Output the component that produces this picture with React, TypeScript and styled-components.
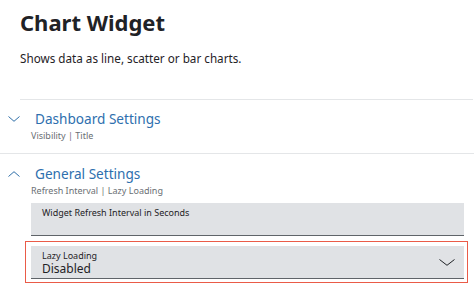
import styled, { createGlobalStyle } from "styled-components";

const GlobalStyle = createGlobalStyle`
  body {
    margin: 0;
    background: #ffffff;
    font-family: "Noto Sans", "Open Sans", sans-serif;
    color: #1f2226;
  }
`;

const Chevron = ({ up, w = 12, h = 6 }: { up?: boolean; w?: number; h?: number }) => (
  <svg width={w} height={h} viewBox={`0 0 ${w} ${h}`} fill="none">
    <path
      d={up ? `M0.5 ${h - 0.5}L${w / 2} 0.7L${w - 0.5} ${h - 0.5}` : `M0.5 0.5L${w / 2} ${h - 0.7}L${w - 0.5} 0.5`}
      stroke="currentColor"
      strokeWidth="1"
    />
  </svg>
);

const App = () => {
  return (
    <>
      <GlobalStyle />
      <Page>
        <Header>
          <Title>Chart Widget</Title>
          <Description>Shows data as line, scatter or bar charts.</Description>
        </Header>
        <Section $divided>
          <SectionHead>
            <Toggle>
              <Chevron />
            </Toggle>
            <SectionTitle>Dashboard Settings</SectionTitle>
          </SectionHead>
          <SectionSub>Visibility | Title</SectionSub>
        </Section>
        <Section>
          <SectionHead>
            <Toggle>
              <Chevron up />
            </Toggle>
            <SectionTitle>General Settings</SectionTitle>
          </SectionHead>
          <SectionSub>Refresh Interval | Lazy Loading</SectionSub>
          <Fields>
            <Field>
              <FieldLabel>Widget Refresh Interval in Seconds</FieldLabel>
            </Field>
            <FocusRing>
              <Field>
                <FieldLabel>Lazy Loading</FieldLabel>
                <FieldValue>Disabled</FieldValue>
                <SelectArrow>
                  <Chevron w={16} h={7} />
                </SelectArrow>
              </Field>
            </FocusRing>
          </Fields>
        </Section>
      </Page>
    </>
  );
};

export default App;

const Page = styled.div`
  width: 474px;
  height: 287px;
  overflow: hidden;
`;
const Header = styled.div`
  box-sizing: border-box;
  height: 100px;
  padding-top: 7px;
  margin: 0 1px 0 20px;
  border-bottom: 1px solid #e4e6e8;
`;
const Title = styled.h1`
  margin: 0;
  font-size: 22px;
  line-height: 30px;
  font-weight: 700;
  color: #1f2226;
`;
const Description = styled.p`
  margin: 13px 0 0;
  font-size: 11.7px;
  line-height: 16px;
  color: #1f2226;
`;
const Section = styled.div<{ $divided?: boolean }>`
  padding-top: ${(p) => (p.$divided ? "9px" : "10px")};
  padding-bottom: ${(p) => (p.$divided ? "11px" : "0")};
  border-bottom: ${(p) => (p.$divided ? "1px solid #e4e6e8" : "none")};
`;
const SectionHead = styled.div`
  display: flex;
  align-items: center;
  height: 20px;
`;
const Toggle = styled.span`
  display: flex;
  width: 35px;
  padding-left: 8px;
  box-sizing: border-box;
  color: #2f6fa8;
`;
const SectionTitle = styled.span`
  font-size: 13.6px;
  line-height: 20px;
  color: #2e6fae;
`;
const SectionSub = styled.div`
  margin-top: 1px;
  padding-left: 31px;
  font-size: 9px;
  line-height: 12px;
  color: #6a6f74;
`;
const Fields = styled.div`
  display: flex;
  flex-direction: column;
  align-items: flex-start;
  gap: 5px;
  padding: 6px 0 0 25px;
`;
const Field = styled.div`
  position: relative;
  margin-left: 6px;
  height: 33px;
  width: 433px;
  box-sizing: border-box;
  background: #e0e2e5;
  border-bottom: 1px solid #5f6469;
  padding: 4px 11px 0;
`;
const FocusRing = styled.div`
  width: 443px;
  box-sizing: border-box;
  padding: 5px 0 4px;
  box-shadow: inset 0 0 0 1px #ea5b48;
  & > div {
    margin-left: 6px;
  }
`;
const FieldLabel = styled.div`
  font-size: 9px;
  line-height: 11px;
  color: #1f2226;
`;
const FieldValue = styled.div`
  margin-top: 1px;
  font-size: 12px;
  line-height: 13px;
  color: #1f2226;
`;
const SelectArrow = styled.span`
  position: absolute;
  right: 9px;
  top: 13px;
  display: flex;
  color: #1f2226;
`;
